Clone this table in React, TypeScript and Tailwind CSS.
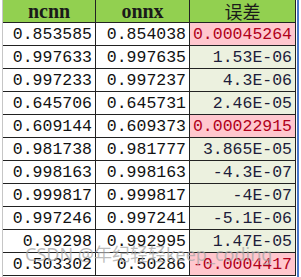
import React from 'react';

type Row = {
  ncnn: string;
  onnx: string;
  diff: string;
  bad?: boolean;
};

const rows: Row[] = [
  { ncnn: '0.853585', onnx: '0.854038', diff: '0.00045264', bad: true },
  { ncnn: '0.997633', onnx: '0.997635', diff: '1.53E-06' },
  { ncnn: '0.997233', onnx: '0.997237', diff: '4.3E-06' },
  { ncnn: '0.645706', onnx: '0.645731', diff: '2.46E-05' },
  { ncnn: '0.609144', onnx: '0.609373', diff: '0.00022915', bad: true },
  { ncnn: '0.981738', onnx: '0.981777', diff: '3.865E-05' },
  { ncnn: '0.998163', onnx: '0.998163', diff: '-4.3E-07' },
  { ncnn: '0.999817', onnx: '0.999817', diff: '-4E-07' },
  { ncnn: '0.997246', onnx: '0.997241', diff: '-5.1E-06' },
  { ncnn: '0.99298', onnx: '0.992995', diff: '1.47E-05' },
  { ncnn: '0.503302', onnx: '0.50286', diff: '-0.0004417', bad: true },
];

const mono = "font-['Liberation_Mono',monospace] text-[16.5px] leading-[17px]";

export default function App() {
  return (
    <div className="relative w-[301px] h-[277px] overflow-hidden bg-white flex">
      <div className="w-[2px] shrink-0" />
      <div className="shrink-0 border-l border-[#c6c6c6]">
        {/* header */}
        <div className="grid grid-cols-[93px_94px_106px] h-[23px] bg-[#92d050] border-b border-[#222]">
          <div className="border-r border-[#222] flex items-end justify-center pb-[1px] font-['Liberation_Serif',serif] font-bold text-[20px] leading-[20px] text-[#1a1a1a]">
            ncnn
          </div>
          <div className="border-r border-[#222] flex items-end justify-center pb-[1px] font-['Liberation_Serif',serif] font-bold text-[20px] leading-[20px] text-[#1a1a1a]">
            onnx
          </div>
          <div className="border-r border-[#222] flex items-center justify-center font-['Noto_Sans_CJK_SC',sans-serif] text-[18px] leading-[22px] text-[#1a1a1a]">
            误差
          </div>
        </div>

        {rows.map((r, i) => (
          <div key={i} className="grid grid-cols-[93px_94px_106px] h-[23px] border-b border-[#222]">
            <div className={`border-r border-[#222] flex items-end justify-end pr-[3px] pb-[2px] text-[#111] ${mono}`}>
              {r.ncnn}
            </div>
            <div className={`border-r border-[#222] flex items-end justify-end pr-[3px] pb-[2px] text-[#111] ${mono}`}>
              {r.onnx}
            </div>
            <div
              className={`border-r border-[#222] flex items-end justify-end pr-[3px] pb-[2px] ${mono} ${
                r.bad ? 'bg-[#ffc7ce] text-[#b0001a]' : 'bg-[#ecf1df] text-[#1c1c3a]'
              }`}
            >
              {r.diff}
            </div>
          </div>
        ))}
      </div>
      <div className="w-[1px] shrink-0" />
      <div className="w-[2px] shrink-0 bg-[#4a78c8]" />

      {/* watermark */}
      <div className="absolute left-[25px] top-[244px] font-['Noto_Sans','Noto_Sans_CJK_SC',sans-serif] text-[18px] leading-[20px] text-[#a8a8a8]/75 whitespace-nowrap">
        CSDN @年纪轻轻keep_coding
      </div>
    </div>
  );
}
